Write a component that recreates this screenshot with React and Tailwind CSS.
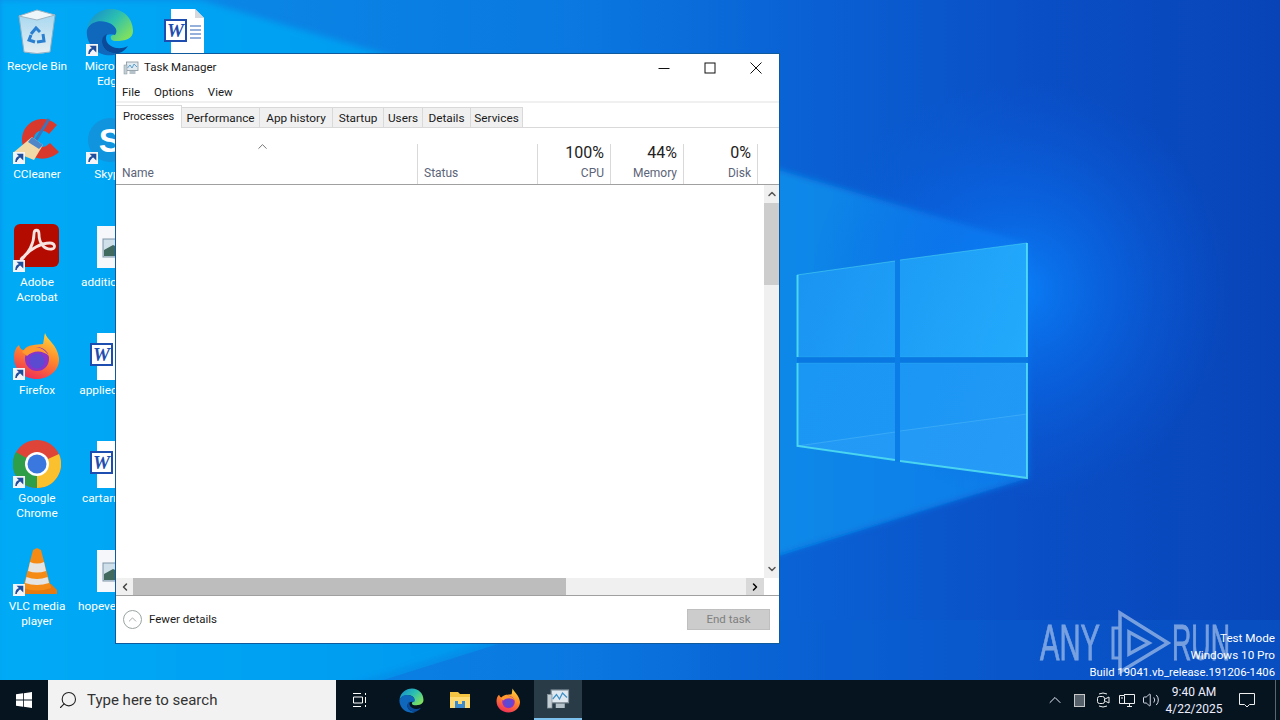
import { useId } from 'react';
import { ChevronUp, ChevronDown, ChevronLeft, ChevronRight, Search, Volume2 } from 'lucide-react';

const font = { fontFamily: 'Roboto, sans-serif' };

function ShortcutArrow() {
  return (
    <svg viewBox="0 0 12 12" className="absolute left-0 bottom-0 w-[12px] h-[12px]">
      <rect width="12" height="12" fill="#f2f4f8" />
      <path d="M3 10 C3 6 5 4.5 7.5 4.5 M5.5 2.5 H9.5 V6.5 Z" stroke="#1f4e9c" strokeWidth="1.6" fill="#1f4e9c" />
    </svg>
  );
}

function RecycleBin() {
  const id = useId();
  return (
    <svg viewBox="0 0 48 48" className="w-[48px] h-[48px]">
      <defs>
        <linearGradient id={id} x1="0" y1="0" x2="0" y2="1">
          <stop offset="0" stopColor="#a8d8f0" />
          <stop offset="1" stopColor="#e6eef2" />
        </linearGradient>
      </defs>
      <path d="M6 8 L42 7 L37 44 Q24 47 11 44 Z" fill={`url(#${id})`} stroke="#8fb0c4" />
      <path d="M6 8 L24 2 L42 7 L24 12 Z" fill="#eef6fa" stroke="#9fb4c0" />
      <path d="M18 26 L23 20 L27 24 M30 26 L31 33 L24 34 M22 34 L16 32 L18 27" stroke="#2a7fd0" strokeWidth="3" fill="none" />
    </svg>
  );
}

function EdgeIcon({ size = 48 }) {
  const id = useId();
  return (
    <svg viewBox="0 0 48 48" style={{ width: size, height: size }}>
      <defs>
        <linearGradient id={id} x1="0" y1="0" x2="1" y2="0.7">
          <stop offset="0" stopColor="#1286d2" />
          <stop offset="0.55" stopColor="#2cc0b0" />
          <stop offset="1" stopColor="#7fe060" />
        </linearGradient>
      </defs>
      <path d="M1 22 C3 9 13 1 25 1 C38 1 47 11 47 23 C47 31 39 33 30 33 C26 33 24 31 25 28 C34 24 28 14 18 14 C10 14 3 18 1 22 Z" fill={`url(#${id})`} />
      <path d="M1 22 C4 14 13 12 20 14 C28 16 33 22 29 27 C21 24 14 30 17 38 C19 43 25 46 33 45 C26 49 15 48 8 41 C3 36 0 29 1 22 Z" fill="#0f68bc" />
      <path d="M17 38 C19 43 25 46 33 45 C37 44 40 41 42 38 C36 41 30 41 25 38 C20 35 19 30 21 26 C16 28 15 33 17 38 Z" fill="#0a4a98" />
    </svg>
  );
}

function WordDoc() {
  return (
    <svg viewBox="0 0 48 48" className="w-[48px] h-[48px]">
      <path d="M11 1 H35 L44 10 V48 H11 Z" fill="#fff" />
      <path d="M35 1 V10 H44 Z" fill="#d5d9de" />
      <path d="M30 18 H41 M30 22 H41 M30 26 H41 M30 30 H41" stroke="#2a62b8" strokeWidth="1.2" />
      <rect x="5" y="12" width="21" height="21" fill="#fff" stroke="#1e4db0" strokeWidth="2" />
      <text x="15.5" y="29" fontSize="19" fontWeight="700" fontStyle="italic" textAnchor="middle" fill="#1e4db0" fontFamily="Liberation Serif, serif">W</text>
    </svg>
  );
}

function ImageDoc() {
  return (
    <svg viewBox="0 0 48 48" className="w-[48px] h-[48px]">
      <rect x="11" y="2" width="36" height="42" fill="#f6f7fa" />
      <rect x="17" y="15" width="28" height="18" fill="#cfe0ea" stroke="#7f95aa" />
      <path d="M18 26 L27 21 L36 25 L44 23 V32 H18 Z" fill="#41695e" />
    </svg>
  );
}

function CCleaner() {
  return (
    <svg viewBox="0 0 48 48" className="w-[48px] h-[48px]">
      <path d="M44 9 C30 -4 9 6 9 24 C9 40 30 50 46 36 L37 27 C29 35 21 30 21 23 C21 15 30 12 36 18 Z" fill="#d8392c" />
      <path d="M36 3 L23 24" stroke="#3f74b8" strokeWidth="3" />
      <path d="M19 21 L30 29 L21 44 L1 36 Z" fill="#f2d9a8" />
      <path d="M19 21 L30 29 L26 33 L15 26 Z" fill="#4f86c8" />
    </svg>
  );
}

function Skype() {
  return (
    <svg viewBox="0 0 48 48" className="w-[48px] h-[48px]">
      <circle cx="24" cy="24" r="22" fill="#1094de" />
      <text x="24" y="36" textAnchor="middle" fontSize="34" fontWeight="700" fill="#fff" fontFamily="Liberation Sans, sans-serif">S</text>
    </svg>
  );
}

function Acrobat() {
  return (
    <svg viewBox="0 0 48 48" className="w-[48px] h-[48px]">
      <rect x="1" y="0" width="45" height="43" rx="6" fill="#b30b00" />
      <path d="M9 34 C15 30 21 20 21 10 C21 5 26 5 26 10 C26 19 31 26 39 25 C43 24 42 19 37 19 C28 19 17 25 11 33 C9 36 7 36 9 34 Z" fill="none" stroke="#f7e4e0" strokeWidth="2.8" />
    </svg>
  );
}

function Firefox({ size = 48 }) {
  const id = useId();
  return (
    <svg viewBox="0 0 48 48" style={{ width: size, height: size }}>
      <defs>
        <linearGradient id={id} x1="0.7" y1="0" x2="0.3" y2="1">
          <stop offset="0" stopColor="#ffd23d" />
          <stop offset="0.45" stopColor="#ff8a2a" />
          <stop offset="1" stopColor="#f02b5a" />
        </linearGradient>
      </defs>
      <path d="M32 1 C34 8 44 12 46 26 C47 38 36 47 24 47 C11 47 1 38 1 25 C1 20 3 15 6 13 C7 17 9 18 11 18 C14 12 24 13 30 12 C31 8 31 4 32 1 Z" fill={`url(#${id})`} />
      <circle cx="24" cy="27" r="12" fill="#8a35c8" />
      <circle cx="24" cy="29" r="7.5" fill="#5a4bd0" />
      <path d="M9 20 C15 12 30 13 36 24 C30 18 20 18 14 24 Z" fill="#ff9a30" />
    </svg>
  );
}

function Chrome() {
  return (
    <svg viewBox="0 0 48 48" className="w-[48px] h-[48px]">
      <circle cx="24" cy="24" r="24" fill="#de4437" />
      <path d="M24 24 L46 14 A24 24 0 0 1 24 48 Z" fill="#fbc02d" />
      <path d="M24 24 L24 48 A24 24 0 0 1 3 12 Z" fill="#2f9e48" />
      <circle cx="24" cy="24" r="12" fill="#fff" />
      <circle cx="24" cy="24" r="9.5" fill="#3a78e0" />
    </svg>
  );
}

function Vlc() {
  return (
    <svg viewBox="0 0 48 48" className="w-[48px] h-[48px]">
      <path d="M4 42 L10 36 H38 L44 42 V46 H4 Z" fill="#e67a10" />
      <path d="M24 0 L28 2 L38 40 Q24 45 10 40 L20 2 Z" fill="#f58a14" />
      <path d="M17 14 Q24 17 31 14 L33 23 Q24 26 15 23 Z" fill="#e4e4e4" />
      <path d="M13.5 29 Q24 33 34.5 29 L36 35 Q24 39 12 35 Z" fill="#e4e4e4" />
    </svg>
  );
}

const desktopIcons = [
  { label: ['Recycle Bin'], icon: <RecycleBin />, plain: true },
  { label: ['Microsoft', 'Edge'], icon: <EdgeIcon /> },
  { label: [''], icon: <WordDoc />, plain: true },
  { label: ['CCleaner'], icon: <CCleaner /> },
  { label: ['Skype'], icon: <Skype /> },
  null,
  { label: ['Adobe', 'Acrobat'], icon: <Acrobat /> },
  { label: ['additionals'], icon: <ImageDoc />, plain: true },
  null,
  { label: ['Firefox'], icon: <Firefox /> },
  { label: ['appliedmen'], icon: <WordDoc />, plain: true },
  null,
  { label: ['Google', 'Chrome'], icon: <Chrome /> },
  { label: ['cartarrives'], icon: <WordDoc />, plain: true },
  null,
  { label: ['VLC media', 'player'], icon: <Vlc /> },
  { label: ['hopeverbals'], icon: <ImageDoc />, plain: true },
  null,
];

function DesktopIcon({ item }) {
  return (
    <div className="flex flex-col items-center text-white text-[11.8px] leading-[15px]">
      <div className="relative w-[48px] h-[48px]">
        {item.icon}
        {!item.plain && <ShortcutArrow />}
      </div>
      <div className="mt-[3px] text-center whitespace-nowrap">
        {item.label.map((line) => (
          <div key={line}>{line}</div>
        ))}
      </div>
    </div>
  );
}

function Wallpaper() {
  return (
    <svg viewBox="0 0 1280 720" className="absolute inset-0 w-full h-full">
      <defs>
        <linearGradient id="wall" x1="0" y1="0" x2="1" y2="0">
          <stop offset="0" stopColor="#0a8fea" />
          <stop offset="0.45" stopColor="#0a78e0" />
          <stop offset="0.62" stopColor="#0a62d4" />
          <stop offset="0.8" stopColor="#0a4fc6" />
          <stop offset="1" stopColor="#0844b8" />
        </linearGradient>
        <linearGradient id="beam" gradientUnits="userSpaceOnUse" x1="0" y1="0" x2="1028" y2="0">
          <stop offset="0" stopColor="#00aaf5" />
          <stop offset="0.5" stopColor="#0098f0" />
          <stop offset="0.8" stopColor="#0a86e8" />
          <stop offset="1" stopColor="#0a7cea" />
        </linearGradient>
        <linearGradient id="floor" gradientUnits="userSpaceOnUse" x1="0" y1="0" x2="1100" y2="0">
          <stop offset="0" stopColor="#00a4f2" />
          <stop offset="0.6" stopColor="#0682e4" />
          <stop offset="0.8" stopColor="#0a6ad8" />
          <stop offset="1" stopColor="#0a58cc" />
        </linearGradient>
        <radialGradient id="glow" gradientUnits="userSpaceOnUse" cx="1020" cy="290" r="210">
          <stop offset="0" stopColor="#0a80f8" stopOpacity="0.95" />
          <stop offset="0.5" stopColor="#0a6cec" stopOpacity="0.5" />
          <stop offset="1" stopColor="#0a60e0" stopOpacity="0" />
        </radialGradient>
        <linearGradient id="pane" gradientUnits="userSpaceOnUse" x1="800" y1="260" x2="1030" y2="340">
          <stop offset="0" stopColor="#1a94f2" />
          <stop offset="1" stopColor="#22aafc" />
        </linearGradient>
        <linearGradient id="paneLow" gradientUnits="userSpaceOnUse" x1="800" y1="370" x2="1030" y2="470">
          <stop offset="0" stopColor="#1a96f4" />
          <stop offset="1" stopColor="#2098f6" />
        </linearGradient>
        <filter id="soft"><feGaussianBlur stdDeviation="3" /></filter>
      </defs>
      <rect width="1280" height="720" fill="url(#wall)" />
      <rect x="700" y="620" width="580" height="100" fill="#0a60d0" opacity="0.35" />
      <path d="M0 500 L1028 478 L0 800 Z" fill="url(#floor)" />
      <path d="M200 0 L1028 243 V478 L0 790 V0 Z" fill="url(#beam)" filter="url(#soft)" />
      <circle cx="1020" cy="290" r="210" fill="url(#glow)" />
      <rect x="797" y="357" width="231" height="6" fill="#0a78e2" />
      <rect x="895" y="260" width="5" height="202" fill="#0a7ee6" />
      <path d="M797 275 L895 261 V357 H797 Z" fill="url(#pane)" />
      <path d="M900 260 L1027 243 V357 H900 Z" fill="url(#pane)" />
      <path d="M797 363 H895 V460 L797 446 Z" fill="url(#paneLow)" />
      <path d="M900 363 H1027 V478 L900 461 Z" fill="url(#paneLow)" />
      <path d="M797 446 L895 432 V460 Z M900 431 L1027 414 V478 L900 461 Z" fill="#3aa8fa" opacity="0.22" />
      <path d="M797 446 L895 432 M900 431 L1027 414" stroke="#70d0fc" strokeWidth="1" opacity="0.3" fill="none" />
      <g stroke="#58e6f0" fill="none">
        <path d="M797.5 275 V357 M797.5 363 V446 L895 460 M900 461 L1027 478 V363 M1027 357 V243" strokeWidth="2" opacity="0.8" />
        <path d="M797 275 L895 261 M900 260 L1027 243" strokeWidth="1" opacity="0.45" />
        <path d="M797 357 H895 M900 357 H1027 M797 363 H895 M900 363 H1027" strokeWidth="1" opacity="0.15" />
      </g>
    </svg>
  );
}

function Watermark() {
  return (
    <svg viewBox="0 0 200 70" className="absolute left-[1035px] top-[608px] w-[200px] h-[70px] opacity-45">
      <text x="5" y="52" fontSize="50" fill="#fff" stroke="#fff" strokeWidth="0.8" textLength="60" lengthAdjust="spacingAndGlyphs" fontFamily="Liberation Sans, sans-serif">ANY</text>
      <path d="M85 5 L133 35 L85 64 Z M94 24 L114 35 L94 46 Z" fill="none" stroke="#fff" strokeWidth="3.5" />
      <path d="M84 20 H78 V50 H84" fill="none" stroke="#fff" strokeWidth="3" />
      <text x="137" y="52" fontSize="50" fill="#fff" stroke="#fff" strokeWidth="0.8" textLength="58" lengthAdjust="spacingAndGlyphs" fontFamily="Liberation Sans, sans-serif">RUN</text>
    </svg>
  );
}

const tabs = [
  { label: 'Performance', width: 'w-[78px]' },
  { label: 'App history', width: 'w-[73px]' },
  { label: 'Startup', width: 'w-[51px]' },
  { label: 'Users', width: 'w-[39px]' },
  { label: 'Details', width: 'w-[48px]' },
  { label: 'Services', width: 'w-[52px]' },
];

function ColumnHeader({ width, pct, label, align = 'right' }) {
  return (
    <div className={`${width} h-[40px] mt-[16px] border-r border-[#d9d9d9] flex flex-col justify-end px-[6px] pb-[3px] ${align === 'right' ? 'items-end' : 'items-start'}`}>
      {pct && <div className="text-[16px] leading-[20px] text-[#222] mb-[2px]">{pct}</div>}
      <div className="text-[12px] leading-[16px] text-[#5b6478]">{label}</div>
    </div>
  );
}

function WindowButton({ children }) {
  return (
    <button className="w-[46px] h-full flex items-center justify-center">
      <svg viewBox="0 0 12 12" className="w-[12px] h-[12px]" fill="none" stroke="#111" strokeWidth="1">
        {children}
      </svg>
    </button>
  );
}

function TaskManager() {
  return (
    <div className="absolute left-[115px] top-[53px] w-[665px] h-[591px] bg-white border border-[#0e5a9c] flex flex-col text-[11.5px] text-[#1a1a1a]">
      <div className="h-[27px] flex items-center pl-[7px] shrink-0">
        <TaskIcon size={16} />
        <span className="ml-[5px] text-[11.5px] mt-[1px]">Task Manager</span>
        <div className="ml-auto flex items-center h-full">
          <WindowButton><path d="M0.5 6.5 H11.5" /></WindowButton>
          <WindowButton><rect x="1" y="1" width="10" height="10" /></WindowButton>
          <WindowButton><path d="M0.5 0.5 L11.5 11.5 M11.5 0.5 L0.5 11.5" /></WindowButton>
        </div>
      </div>
      <div className="h-[22px] flex items-center gap-[14px] pl-[6px] pt-[3px] shrink-0 border-b-2 border-[#f0f0f0]">
        <span>File</span>
        <span>Options</span>
        <span>View</span>
      </div>
      <div className="h-[25px] flex items-end border-b border-[#d9d9d9] shrink-0 text-[11.8px]">
        <div className="w-[66px] h-[23px] bg-white border-r border-t border-[#d9d9d9] pl-[7px] text-[11px] leading-[21px] relative top-[1px]">Processes</div>
        {tabs.map((t) => (
          <div key={t.label} className={`${t.width} h-[20px] bg-[#f0f0f0] border-r border-t border-[#d9d9d9] text-center leading-[20px]`}>{t.label}</div>
        ))}
      </div>
      <div className="h-[57px] flex border-b border-[#a0a0a0] shrink-0 relative">
        <ChevronUp size={15} strokeWidth={1.3} className="absolute left-[139px] top-[11px] text-[#555]" />
        <ColumnHeader width="w-[302px]" label="Name" align="left" />
        <ColumnHeader width="w-[120px]" label="Status" align="left" />
        <ColumnHeader width="w-[73px]" pct="100%" label="CPU" />
        <ColumnHeader width="w-[73px]" pct="44%" label="Memory" />
        <ColumnHeader width="w-[74px]" pct="0%" label="Disk" />
      </div>
      <div className="flex-1 flex min-h-0">
        <div className="flex-1 flex flex-col min-w-0">
          <div className="flex-1" />
          <div className="h-[17px] bg-[#f0f0f0] flex items-center">
            <div className="w-[17px] flex justify-center"><ChevronLeft size={12} strokeWidth={3} className="text-[#444]" /></div>
            <div className="w-[433px] h-full bg-[#bdbdbd]" />
            <div className="flex-1" />
            <div className="w-[18px] h-full bg-[#d9d9d9] flex justify-center items-center"><ChevronRight size={12} strokeWidth={3} className="text-black" /></div>
          </div>
        </div>
        <div className="w-[15px] bg-[#f0f0f0] flex flex-col items-center mb-[17px]">
          <div className="h-[18px] flex items-center"><ChevronUp size={12} strokeWidth={3} className="text-[#555]" /></div>
          <div className="w-full h-[82px] bg-[#cdcdcd]" />
          <div className="flex-1" />
          <div className="h-[18px] flex items-center"><ChevronDown size={12} strokeWidth={3} className="text-[#555]" /></div>
        </div>
      </div>
      <div className="h-[48px] border-t border-[#a0a0a0] flex items-center pl-[7px] pr-[9px] shrink-0">
        <div className="w-[19px] h-[19px] rounded-full border border-[#9aa5a0] flex items-center justify-center"><ChevronUp size={13} strokeWidth={1.3} className="text-[#888]" /></div>
        <span className="ml-[7px]">Fewer details</span>
        <div className="ml-auto w-[83px] h-[21px] bg-[#cccccc] border border-[#bfbfbf] text-[#7f7f7f] text-center leading-[19px]">End task</div>
      </div>
    </div>
  );
}

function TaskIcon({ size = 16 }) {
  return (
    <svg viewBox="0 0 16 16" style={{ width: size, height: size }}>
      <rect x="3.5" y="2" width="11.5" height="8.5" fill="#dfe9ef" stroke="#85939c" strokeWidth="0.8" />
      <path d="M4.5 8 L7 5 L9 8 L11 4 L14 7" stroke="#3b8fc8" strokeWidth="0.8" fill="none" />
      <rect x="1" y="5" width="3" height="9" fill="#c3ced4" stroke="#85939c" strokeWidth="0.5" />
      <rect x="6.5" y="11" width="6" height="3" fill="#b6c2c9" />
    </svg>
  );
}

function FolderIcon() {
  return (
    <svg viewBox="0 0 24 24" className="w-[24px] h-[24px]">
      <path d="M2 4 H10 L12 6 H22 V20 H2 Z" fill="#f4c542" />
      <path d="M2 9 H22 V20 H2 Z" fill="#ffdc73" />
      <rect x="7" y="13" width="10" height="7" fill="#3b8bd0" />
      <rect x="10" y="13" width="4" height="3" fill="#ffdc73" />
    </svg>
  );
}

function Taskbar() {
  return (
    <div className="absolute left-0 right-0 bottom-0 h-[40px] bg-[#05141f] flex items-stretch text-white">
      <div className="w-[48px] flex items-center justify-center">
        <svg viewBox="0 0 16 16" className="w-[16px] h-[16px]" fill="#fff">
          <path d="M0 2.3 L7 1.3 V7.6 H0 Z M7.8 1.2 L16 0 V7.6 H7.8 Z M0 8.4 H7 V14.7 L0 13.7 Z M7.8 8.4 H16 V16 L7.8 14.8 Z" />
        </svg>
      </div>
      <div className="w-[288px] bg-[#f2f2f2] flex items-center pl-[10px] text-[#333] text-[15px]">
        <Search size={20} strokeWidth={1.3} className="-scale-x-100 text-[#222]" />
        <span className="ml-[9px]">Type here to search</span>
      </div>
      <div className="w-[48px] flex items-center justify-center">
        <svg viewBox="0 0 16 16" className="w-[16px] h-[16px]" fill="none" stroke="#fff">
          <path d="M1 1.5 H9 M1 14.5 H9 M1.5 5 H10.5 V11 H1.5 Z M13.5 1 V3 M13.5 5 V11 M13.5 13 V15" />
        </svg>
      </div>
      <div className="w-[54px] flex items-center justify-center"><EdgeIcon size={25} /></div>
      <div className="w-[44px] flex items-center justify-center"><FolderIcon /></div>
      <div className="w-[52px] flex items-center justify-center"><Firefox size={25} /></div>
      <div className="w-[48px] bg-[#2a3b48] border-b-2 border-[#7cc0ee] flex items-center justify-center"><TaskIcon size={24} /></div>
      <div className="flex-1" />
      <div className="flex items-center text-[#eef]">
        <div className="w-[24px] flex justify-center"><ChevronUp size={20} strokeWidth={1.2} /></div>
        <div className="w-[24px] flex justify-center"><div className="w-[11px] h-[13px] bg-[#55606a] border border-[#c8c8c8]" /></div>
        <div className="w-[24px] flex justify-center">
          <svg viewBox="0 0 16 16" className="w-[16px] h-[16px]" fill="none" stroke="#eee">
            <path d="M4 2 Q8 0 12 2 M4 14 Q8 16 12 14" />
            <rect x="2.5" y="4.5" width="7" height="7" rx="2" />
            <path d="M10 7 L14 5 V11 L10 9" />
          </svg>
        </div>
        <div className="w-[24px] flex justify-center">
          <svg viewBox="0 0 16 16" className="w-[16px] h-[16px]" fill="none" stroke="#eee">
            <path d="M5 2.5 H15.5 V11.5 H5 M8 14.5 H13 M10.5 11.5 V14.5 M0.5 3.5 H5.5 V11.5 H0.5 Z M2 6 H4" />
          </svg>
        </div>
        <div className="w-[24px] flex justify-center"><Volume2 size={18} strokeWidth={1.2} /></div>
        <div className="w-[62px] pt-[2px] text-center text-[12px] leading-[17px] whitespace-nowrap">
          <div>9:40 AM</div>
          <div>4/22/2025</div>
        </div>
        <div className="w-[50px] pr-[6px] flex justify-center">
          <svg viewBox="0 0 18 18" className="w-[18px] h-[18px]" fill="none" stroke="#eee">
            <path d="M1.5 2.5 H16.5 V13.5 H11.5 L9 16 L6.5 13.5 H1.5 Z" />
          </svg>
        </div>
        <div className="w-[5px] h-full border-l border-[#5a6670]" />
      </div>
    </div>
  );
}

export default function App() {
  return (
    <div className="relative w-[1280px] h-[720px] overflow-hidden" style={font}>
      <Wallpaper />
      <div className="absolute left-[1px] top-[8px] grid grid-cols-[72px_74px_74px] auto-rows-[108px]">
        {desktopIcons.map((item, i) => (
          <div key={i}>{item && <DesktopIcon item={item} />}</div>
        ))}
      </div>
      <Watermark />
      <div className="absolute right-[5px] top-[630px] text-right text-white text-[11.7px] leading-[17px]">
        <div>Test Mode</div>
        <div>Windows 10 Pro</div>
        <div className="text-[11.3px]">Build 19041.vb_release.191206-1406</div>
      </div>
      <TaskManager />
      <Taskbar />
    </div>
  );
}
